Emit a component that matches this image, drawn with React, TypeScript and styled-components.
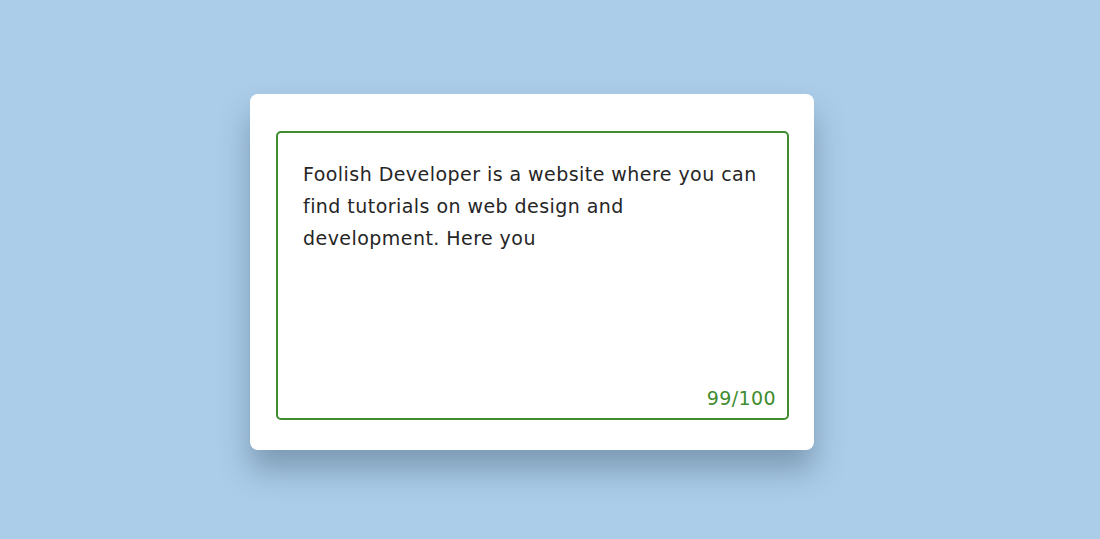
import React from "react";
import styled, { createGlobalStyle } from "styled-components";

const Global = createGlobalStyle`
  * { box-sizing: border-box; }
  html, body { margin: 0; padding: 0; }
  body {
    background: #abcde9;
    font-family: "DejaVu Sans", "Liberation Sans", sans-serif;
  }
`;

const Page = styled.main`
  width: 100%;
  height: 539px;
  display: flex;
  justify-content: center;
  padding-top: 94px;
`;

const Card = styled.section`
  width: 564px;
  height: 356px;
  transform: translateX(-18px);
  background: #ffffff;
  border-radius: 8px;
  padding: 37px 25px 30px 26px;
  box-shadow: 0 20px 30px rgba(40, 60, 80, 0.35);
`;

const Field = styled.div`
  position: relative;
  width: 100%;
  height: 100%;
`;

const TextArea = styled.textarea`
  width: 100%;
  height: 100%;
  resize: none;
  border: 2px solid #3f8c2f;
  border-radius: 5px;
  outline: none;
  padding: 25px 24px 25px 25px;
  font-family: "DejaVu Sans", "Liberation Sans", sans-serif;
  font-size: 19px;
  letter-spacing: 0.45px;
  line-height: 32px;
  color: #262626;
  background: #fff;
  display: block;
`;

const Counter = styled.span`
  position: absolute;
  right: 13px;
  bottom: 10px;
  font-size: 19px;
  letter-spacing: 0.4px;
  line-height: 24px;
  color: #3f8c2f;
  font-family: "DejaVu Sans", "Liberation Sans", sans-serif;
`;

const text =
  "Foolish Developer is a website where you can find tutorials on web design and development. Here you";

export default function App() {
  return (
    <>
      <Global />
      <Page>
        <Card>
          <Field>
            <TextArea defaultValue={text} maxLength={100} spellCheck={false} />
            <Counter>99/100</Counter>
          </Field>
        </Card>
      </Page>
    </>
  );
}
